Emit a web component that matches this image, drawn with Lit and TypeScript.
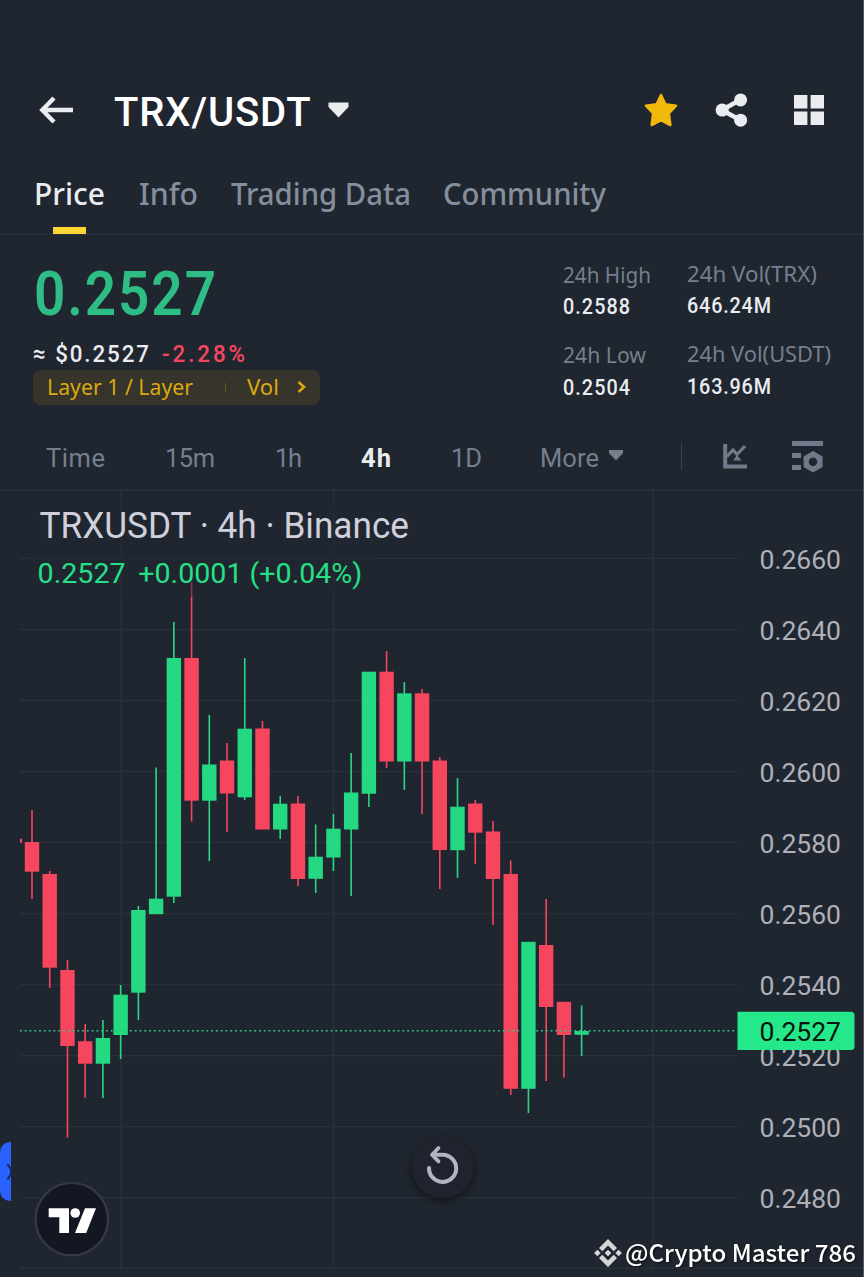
import { LitElement, html, svg, css } from "lit";
import { customElement } from "lit/decorators.js";

/** A single line of text set to an exact advance width; baseline sits at 85% of the size. */
const line = (text: string, width: number, size: number, cls = "", adjust = "spacing", squeeze = 1) => html`
  <svg class="line ${cls}" width=${width} height=${size} font-size=${size}>
    <text x="0" y=${size * 0.85} textLength=${width / squeeze} lengthAdjust=${adjust} transform="scale(${squeeze} 1)" xml:space="preserve">${text}</text>
  </svg>`;

/** Narrow figures with open tracking, used for prices and volumes. */
const figures = (text: string, width: number, size: number, cls = "") => line(text, width, size, cls, "spacing", 0.9);

type Candle = [up: number, high: number, top: number, bottom: number, low: number];

const CANDLES: Candle[] = [
  [0, 810, 842, 871.7, 899], [0, 871, 874, 967.7, 988], [0, 960, 970, 1046, 1137.5],
  [0, 1024, 1041.3, 1063.7, 1098], [1, 1020, 1038, 1063.7, 1098], [1, 985, 994.7, 1035, 1059],
  [1, 906, 910, 992.7, 1020], [1, 767.5, 898.7, 914.2, 914], [1, 622, 658, 896.7, 903],
  [0, 582, 658, 800.7, 821.5], [1, 715, 764.5, 800.7, 861], [0, 743, 760.5, 793.5, 832],
  [1, 658, 728.7, 797.3, 800], [0, 721, 728.5, 829.5, 829], [1, 796, 803.7, 829.5, 839],
  [0, 796, 803.5, 879, 886], [1, 824.5, 856.7, 878.8, 893], [1, 814, 828.7, 857.5, 871],
  [1, 753, 792.5, 829.5, 896], [1, 672, 671.7, 793.7, 807], [0, 651, 671.7, 761.5, 768],
  [1, 682, 693.3, 761.5, 790], [0, 689, 693.3, 761.5, 814], [0, 757, 760.5, 850, 889],
  [1, 778, 806.7, 850.2, 878], [0, 800, 803.5, 832.7, 864], [0, 821, 831.5, 879, 925],
  [0, 860.5, 874, 1088.8, 1095], [1, 942, 941.8, 1088.8, 1113], [0, 899, 945, 1007, 1081],
  [0, 1002, 1001.8, 1035, 1077.5], [1, 1005.5, 1031, 1034.8, 1056],
];

const PRICES = [0.266, 0.264, 0.262, 0.26, 0.258, 0.256, 0.254, 0.252, 0.25, 0.248];
const STEP_Y = 71.03;
const TOP_Y = 558.4;

@customElement("price-chart")
export class PriceChart extends LitElement {
  static styles = css`
    :host { display: block; height: 787px; }
    svg { display: block; font-family: Roboto, sans-serif; }
    .grid { stroke: #2b303a; stroke-width: 1.4; }
    .up { fill: #25d882; }
    .down { fill: #f6465d; }
    .axis { fill: #aeb0ba; font-size: 26.4px; }
    .now { fill: #06140d; font-size: 26.4px; }
    .symbol { fill: #cfd0dc; font-size: 36px; }
    .change { fill: #25e086; font-size: 27.5px; }
    .mark { fill: #fff; font-size: 23.5px; font-weight: 500; font-family: "Noto Sans CJK SC", sans-serif; filter: drop-shadow(1px 1px 1px #000a); }
    .floating { filter: drop-shadow(0 3px 4px #0008); }
  `;

  render() {
    return html`<svg width="863" height="787" viewBox="0 490 863 787">
      <g class="grid">
        ${[121, 333.6, 652.8].map((x) => svg`<line x1=${x} x2=${x} y1="490" y2="1268"></line>`)}
        ${PRICES.map((_, i) => svg`<line x1="20" x2="737.5" y1=${TOP_Y + i * STEP_Y} y2=${TOP_Y + i * STEP_Y}></line>`)}
        <line x1="20" x2="863" y1="1268.2" y2="1268.2"></line>
      </g>
      <rect class="down" x="20" y="838.7" width="2" height="4"></rect>
      ${CANDLES.map(([up, high, top, bottom, low], i) => {
        const x = 32 + i * 17.73;
        return svg`<g class=${up ? "up" : "down"}>
          <rect x=${x - 0.8} y=${high} width="1.6" height=${low - high}></rect>
          <rect x=${x - 7.2} y=${top} width="14.4" height=${bottom - top}></rect>
        </g>`;
      })}
      <line x1="20" x2="737" y1="1030.8" y2="1030.8" stroke="#2bc983" stroke-width="1.6" stroke-dasharray="1.8 2.98"></line>
      <rect x="29" y="498" width="347" height="99" fill="#202630" opacity=".5"></rect>
      <text class="symbol" x="39.5" y="537.8" textLength="369.5" lengthAdjust="spacingAndGlyphs">TRXUSDT · 4h · Binance</text>
      <text class="change" x="37.6" y="582.9" textLength="88" lengthAdjust="spacingAndGlyphs">0.2527</text>
      <text class="change" x="138.3" y="582.9" textLength="224" lengthAdjust="spacingAndGlyphs">+0.0001 (+0.04%)</text>
      ${PRICES.map((p, i) => svg`<text class="axis" x="759.5" y=${568.8 + i * STEP_Y} textLength="81.5" lengthAdjust="spacingAndGlyphs">${p.toFixed(4)}</text>`)}
      <path d="M737.5 1011.7H851a3.5 3.5 0 0 1 3.5 3.5V1046.5a3.5 3.5 0 0 1-3.5 3.5H737.5Z" fill="#25e88b"></path>
      <text class="now" x="759.5" y="1040.6" textLength="81.5" lengthAdjust="spacingAndGlyphs">0.2527</text>

      <path d="M11 1142H10A10 10 0 0 0 0 1152V1191A10 10 0 0 0 10 1201H11Z" fill="#2962ff"></path>
      <path d="M7.5 1164L11 1169.5V1174L7.5 1179.5" fill="none" stroke="#162a5c" stroke-width="2"></path>

      <circle cx="71.8" cy="1219.2" r="36.2" fill="#131722" stroke="#363a45" stroke-width="2.2"></circle>
      <g fill="#fff">
        <path d="M48.7 1208.3H69V1233H59.3V1217.3H48.7Z"></path>
        <circle cx="75.2" cy="1213" r="4.8"></circle>
        <path d="M85 1208.3H96L86.2 1233H75Z"></path>
      </g>

      <circle class="floating" cx="443" cy="1167" r="31" fill="#1f232d"></circle>
      <g fill="none" stroke="#b2b5c0" stroke-width="4" stroke-linecap="round" stroke-linejoin="round">
        <path d="M429 1168A13.6 13.6 0 1 0 442.7 1154.7H433"></path>
        <path d="M438.5 1148L432 1154.7L438.5 1161.3" stroke-width="3.8"></path>
      </g>

      <g fill="#d6d6d6">
        <path d="M608 1239L617 1248L613.7 1251.3L608 1245.6L602.3 1251.3L599 1248Z"></path>
        <path d="M608 1267L617 1258L613.7 1254.7L608 1260.4L602.3 1254.7L599 1258Z"></path>
        <path d="M608 1249.7l3.3 3.3-3.3 3.3-3.3-3.3ZM597.4 1249.7l3.3 3.3-3.3 3.3-3.3-3.3ZM618.6 1249.7l3.3 3.3-3.3 3.3-3.3-3.3Z"></path>
      </g>
      <text class="mark" x="625" y="1261.5" textLength="231" lengthAdjust="spacingAndGlyphs">@Crypto Master 786</text>
    </svg>`;
  }
}

@customElement("app-root")
export class AppRoot extends LitElement {
  static styles = css`
    :host { display: block; box-sizing: border-box; height: 1277px; overflow: hidden; background: #202630; border-right: 1px solid #555b64; font-family: Roboto, sans-serif; }
    .line { display: block; overflow: visible; fill: currentColor; flex: none; }
    svg { display: block; flex: none; }
    .top { display: flex; align-items: center; height: 44px; padding: 88px 39px 0; color: #eaecef; }
    .title { color: #fff; font-weight: 500; margin: 4px 17px 0 41px; }
    .star { margin-left: auto; margin-right: 37px; }
    .share { margin-right: 46px; }
    .tabs { display: flex; height: 101px; border-bottom: 2px solid #282e38; color: #848e9c; font-family: "Noto Sans", sans-serif; }
    .tab { display: flex; flex-direction: column; align-items: center; justify-content: space-between; padding-top: 47px; height: 55px; margin-right: 32.6px; }
    .tab:first-child { margin-left: 34px; margin-right: 34px; color: #eaecef; }
    .bar { width: 33px; height: 7px; background: #fcd535; }
    .medium { font-weight: 500; }
    .quote { display: flex; height: 254px; margin-bottom: -1px; border-bottom: 2px solid #282d37; flex-direction: column; }
    .summary { display: flex; height: 180px; }
    .left { width: 529.5px; padding-left: 33px; }
    .big { color: #2ebd85; font-weight: 600; margin: 28px 0 0 1px; }
    .usd { display: flex; gap: 13px; margin-top: 17px; height: 28px; color: #eaecef; }
    .fall { color: #f6465d; }
    .tag { display: flex; align-items: center; box-sizing: border-box; width: 287px; height: 35px; margin-top: .5px; padding-left: 13.5px; border-radius: 8px; background: #37342c; color: #dba90c; font-family: "Noto Sans", sans-serif; }
    .pipe { width: 1.5px; height: 9px; margin: 0 20.5px 0 32px; background: #6b5821; }
    .chev { margin-left: 18px; }
    .stats { display: grid; grid-template-columns: 124px 150px; grid-auto-rows: 80.2px; padding-top: 28px; }
    .stat { display: flex; flex-direction: column; gap: 9.7px; color: #848e9c; }
    .stat:nth-child(odd) { padding-top: 1px; }
    .label { color: #767f8e; font-family: "Noto Sans", sans-serif; }
    .value { color: #eaecef; }
    .frames { display: flex; align-items: center; height: 74px; padding: 11px 0 0 46.4px; color: #767e8d; box-sizing: border-box; }
    .g1 { margin-left: 60px; } .g2 { margin-left: 59.6px; } .g3 { margin-left: 59px; }
    .g4 { margin-left: 60px; } .g5 { margin-left: 58.4px; }
    .active { color: #eaecef; font-weight: 700; margin-top: 1px; }
    .caret { margin-left: 10px; margin-top: -5px; }
    .rule { width: 1.5px; height: 27px; margin: -3px 41px 0 57.6px; background: #3a414d; }
    .tool { margin-right: 45px; margin-top: -3px; }
    .config { margin-top: -2px; }
  `;

  private tab(text: string, width: number, active = false) {
    return html`<div class="tab">${line(text, width, 30, "medium", "spacingAndGlyphs")}${active ? html`<div class="bar"></div>` : ""}</div>`;
  }

  private stat(label: string, lw: number, value: string, vw: number) {
    return html`<div class="stat">${line(label, lw, 21.8, "label", "spacingAndGlyphs")}${figures(value, vw, 22, "value medium")}</div>`;
  }

  render() {
    return html`
      <header class="top">
        <svg width="34" height="28" viewBox="0 0 34 28" fill="none" stroke="#eaecef" stroke-width="4.4"><path d="M34 14H4M15 2L3.3 14L15 26"></path></svg>
        ${line("TRX/USDT", 196.5, 40, "title")}
        <svg width="21" height="16" viewBox="0 0 21 16" fill="#eaecef"><path d="M.5.5H20.5V5L10.5 15.5L.5 5Z"></path></svg>
        <svg class="star" width="34" height="34" viewBox="0 0 34 34"><path d="M17 2L21.3 11.2L32 12.7L24.8 20.3L26.3 32L17 27L7.7 32L9.2 20.3L2 12.7L12.7 11.2Z" fill="#f0b90b" stroke="#f0b90b" stroke-width="2.6" stroke-linejoin="round"></path></svg>
        <svg class="share" width="33" height="34" viewBox="0 0 33 34" fill="#eaecef"><path d="M7 17L25 7M7 17L25 27" stroke="#eaecef" stroke-width="4.6"></path><circle cx="7.2" cy="17" r="6.6"></circle><circle cx="25.6" cy="6.9" r="6.5"></circle><circle cx="25.6" cy="27.2" r="6.5"></circle></svg>
        <svg width="30" height="30" viewBox="0 0 30 30" fill="#eaecef"><path d="M0 0H13.4V13.4H0ZM16.6 0H30V13.4H16.6ZM0 16.6H13.4V30H0ZM16.6 16.6H30V30H16.6Z"></path></svg>
      </header>
      <nav class="tabs">
        ${this.tab("Price", 71, true)}${this.tab("Info", 59)}${this.tab("Trading Data", 180)}${this.tab("Community", 163)}
      </nav>
      <section class="quote">
        <div class="summary">
          <div class="left">
            ${figures("0.2527", 182, 61, "big")}
            <div class="usd">${figures("≈ $0.2527", 116, 24.8, "medium")}${figures("-2.28%", 83, 24.8, "fall medium")}</div>
            <div class="tag">
              ${line("Layer 1 / Layer", 146, 22, "", "spacingAndGlyphs")}<div class="pipe"></div>${line("Vol", 32, 22, "", "spacingAndGlyphs")}
              <svg class="chev" width="10" height="14" viewBox="0 0 10 14" fill="none" stroke="#dba90c" stroke-width="2.6"><path d="M1.5 2L7 7L1.5 12"></path></svg>
            </div>
          </div>
          <div class="stats">
            ${this.stat("24h High", 88, "0.2588", 67)}${this.stat("24h Vol(TRX)", 130, "646.24M", 84)}
            ${this.stat("24h Low", 83, "0.2504", 67)}${this.stat("24h Vol(USDT)", 144, "163.96M", 84)}
          </div>
        </div>
        <div class="frames">
          ${line("Time", 59, 25.5)}${line("15m", 50, 25.5, "g1")}${line("1h", 27, 25.5, "g2")}${line("4h", 30, 25.5, "g3 active")}
          ${line("1D", 31, 25.5, "g4")}${line("More", 59, 25.5, "g5")}
          <svg class="caret" width="14" height="11" viewBox="0 0 14 11" fill="#767e8d"><path d="M0 0H14V3L7 10.5L0 3Z"></path></svg>
          <div class="rule"></div>
          <svg class="tool" width="24" height="25" viewBox="0 0 24 25" fill="none" stroke="#717a8a" stroke-width="4"><path d="M2.2 0V22.6H24"></path><path d="M4 12.5L10 6L14 10.5L22 2" stroke-width="3.2"></path><path d="M14 11L18.5 16.5H10Z" fill="#717a8a" stroke="none"></path></svg>
          <svg class="config" width="31" height="32" viewBox="0 0 31 32" fill="#717a8a"><path d="M0 0H31V5H0ZM0 12H9V17H0ZM0 24H9V29H0Z"></path><path fill-rule="evenodd" d="M21 10L30.6 15.5V26L21 31.5L11.6 26V15.5ZM21 16.5A4.2 4.2 0 1 0 21 25A4.2 4.2 0 1 0 21 16.5Z"></path></svg>
        </div>
      </section>
      <price-chart></price-chart>
    `;
  }
}
